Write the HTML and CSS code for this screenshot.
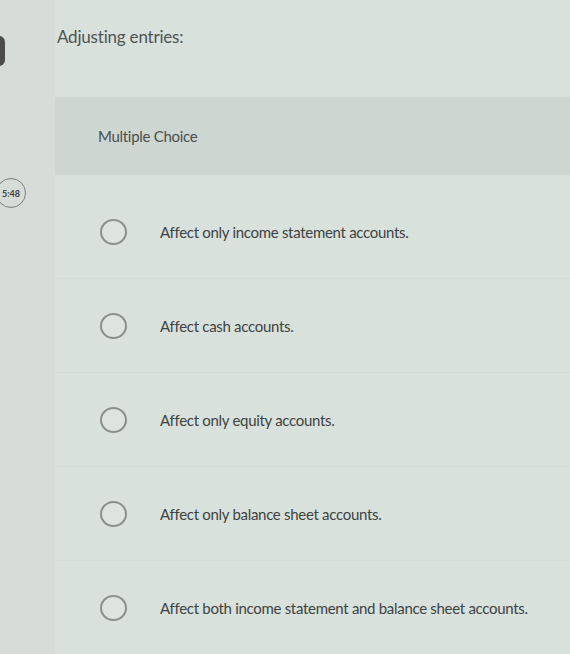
FILE: index.html
```html
<!DOCTYPE html>
<html>
<head>
<meta charset="utf-8">
<link rel="stylesheet" href="styles.css">
</head>
<body>
<div class="page">
  <aside class="side">
    <div class="nav-dot"></div>
    <div class="timer">5:48</div>
  </aside>
  <main class="main">
    <h1 class="title">Adjusting entries:</h1>
    <div class="band"><span class="band-label">Multiple Choice</span></div>
    <ul class="options">
      <li class="option"><span class="radio"></span><span class="opt-text">Affect only income statement accounts.</span></li>
      <li class="option"><span class="radio"></span><span class="opt-text">Affect cash accounts.</span></li>
      <li class="option"><span class="radio"></span><span class="opt-text">Affect only equity accounts.</span></li>
      <li class="option"><span class="radio"></span><span class="opt-text">Affect only balance sheet accounts.</span></li>
      <li class="option"><span class="radio"></span><span class="opt-text">Affect both income statement and balance sheet accounts.</span></li>
    </ul>
  </main>
</div>
</body>
</html>
```
FILE: styles.css
```css
html, body {
  margin: 0;
  padding: 0;
  height: 100%;
}
body {
  background: #d9e1dd;
  font-family: Lato, "Open Sans", "Liberation Sans", sans-serif;
  color: #414644;
  overflow: hidden;
}
.page {
  display: flex;
  height: 654px;
}
.side {
  width: 55px;
  flex: none;
  background: #d6ddd9;
  display: flex;
  flex-direction: column;
}
.nav-dot {
  width: 12px;
  height: 30px;
  margin-top: 36px;
  margin-left: -7px;
  border-radius: 6px;
  background: #4a4d4c;
}
.timer {
  margin-top: 112px;
  margin-left: -4px;
  width: 30px;
  height: 30px;
  box-sizing: border-box;
  border: 1.5px solid #7a7f7d;
  border-radius: 15px;
  font-size: 9px;
  font-weight: 700;
  color: #3d403f;
  display: flex;
  align-items: center;
  justify-content: flex-end;
  padding-right: 5px;
}
.main {
  flex: 1;
  display: flex;
  flex-direction: column;
}
.title {
  margin: 26px 0 0 2px;
  font-size: 17px;
  font-weight: 400;
  color: #4f5452;
  height: 40px;
  letter-spacing: -0.2px;
}
.band {
  margin-top: 40px;
  height: 78px;
  flex: none;
  background: #ced6d2;
  display: flex;
  align-items: center;
  padding-left: 43px;
}
.band-label {
  font-size: 15px;
  color: #4a4f4d;
  letter-spacing: -0.3px;
}
.options {
  list-style: none;
  margin: 10px 0 0 0;
  padding: 0;
}
.option {
  height: 93px;
  display: flex;
  align-items: center;
  padding-left: 45px;
  border-top: 1px solid #d3dbd7;
}
.option:first-child {
  border-top: none;
}
.radio {
  width: 23px;
  height: 22px;
  border: 2px solid #8a8f8d;
  border-radius: 50%;
  flex: none;
  background: #dde4e0;
}
.opt-text {
  margin-left: 33px;
  font-size: 15px;
  color: #3e4341;
  letter-spacing: -0.3px;
}
```
